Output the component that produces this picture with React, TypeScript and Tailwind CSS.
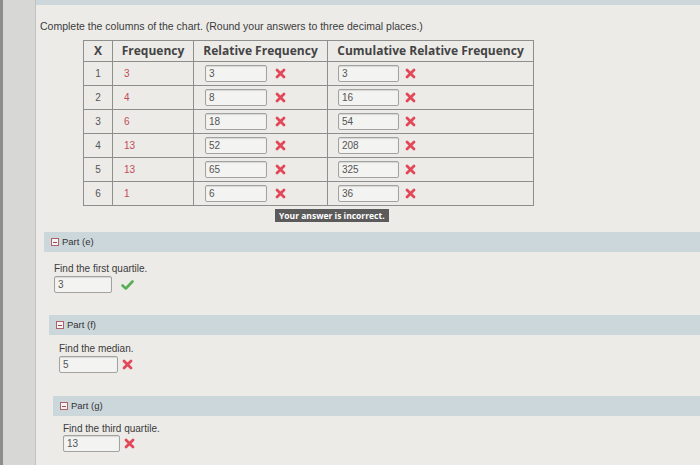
import React from "react";

// Chart rows: x, frequency, relative freq answer, cumulative answer
const rows = [
  { x: 1, f: 3, rel: "3", cum: "3" },
  { x: 2, f: 4, rel: "8", cum: "16" },
  { x: 3, f: 6, rel: "18", cum: "54" },
  { x: 4, f: 13, rel: "52", cum: "208" },
  { x: 5, f: 13, rel: "65", cum: "325" },
  { x: 6, f: 1, rel: "6", cum: "36" },
];

function Cross() {
  return (
    <svg width="11" height="11" viewBox="0 0 11 11" className="shrink-0">
      <path d="M2 2 L9 9 M9 2 L2 9" stroke="#e2475a" strokeWidth="2.8" strokeLinecap="round" />
    </svg>
  );
}

function Check() {
  return (
    <svg width="13" height="10" viewBox="0 0 13 10" className="shrink-0">
      <path d="M1.5 5.5 L4.8 8.5 L11.5 1.5" stroke="#5aae55" strokeWidth="2.6" fill="none" strokeLinecap="round" strokeLinejoin="round" />
    </svg>
  );
}

function AnswerBox({ value, w = "w-[62px]" }: { value: string; w?: string }) {
  return (
    <div
      className={`${w} h-[17px] border border-[#a2a2a0] rounded-[2px] bg-[#f3f3f1] shadow-[inset_0_1px_1px_rgba(0,0,0,0.12)] text-[10px] leading-[15px] pl-[3px] text-[#555]`}
    >
      {value}
    </div>
  );
}

function PartBar({ label, indent }: { label: string; indent: string }) {
  return (
    <div className={`${indent} h-[20px] bg-[#ccd7dc] flex items-center pl-[7px] gap-[3px]`}>
      <span className="w-[8px] h-[8px] border border-[#b0606a] bg-[#f4f4f2] flex items-center justify-center">
        <span className="w-[4px] h-px bg-[#9a4a55]" />
      </span>
      <span className="text-[9.5px] text-[#333] font-medium">{label}</span>
    </div>
  );
}

export default function App() {
  return (
    <div className="w-[700px] h-[465px] flex bg-[#ecebe8] overflow-hidden font-['Liberation_Sans',Arial,sans-serif]">
      <div className="w-[36px] shrink-0 bg-[#d7d7d5] border-l-[3px] border-l-[#8d8d8b] border-r border-r-[#c2c2c0]" />
      <div className="flex-1 flex flex-col">
        <div className="h-[5px] bg-[#cdd6da]" />
        <p className="mt-[15px] pl-[4px] text-[10.5px] leading-[13px] text-[#3b3b3b]">
          Complete the columns of the chart. (Round your answers to three decimal places.)
        </p>

        <div className="relative ml-[47px] mt-[7px] w-[451px]">
          <table className="border-collapse border border-[#8e8e8c] text-[10px] text-[#555]">
            <thead>
              <tr className="h-[21px] font-['Open_Sans',sans-serif] font-bold text-[12px] text-[#444]">
                <th className="w-[29px] border border-[#8e8e8c] font-bold">X</th>
                <th className="w-[81px] border border-[#8e8e8c] font-bold">Frequency</th>
                <th className="w-[134px] border border-[#8e8e8c] font-bold">Relative Frequency</th>
                <th className="w-[206px] border border-[#8e8e8c] font-bold">Cumulative Relative Frequency</th>
              </tr>
            </thead>
            <tbody>
              {rows.map((r) => (
                <tr key={r.x} className="h-[24px]">
                  <td className="border border-[#8e8e8c] text-center text-[#555]">{r.x}</td>
                  <td className="border border-[#8e8e8c] pl-[11px] text-[#c24b5a]">{r.f}</td>
                  <td className="border border-[#8e8e8c] pl-[11px]">
                    <div className="flex items-center gap-[8px]">
                      <AnswerBox value={r.rel} />
                      <Cross />
                    </div>
                  </td>
                  <td className="border border-[#8e8e8c] pl-[10px]">
                    <div className="flex items-center gap-[6px]">
                      <AnswerBox value={r.cum} w="w-[61px]" />
                      <Cross />
                    </div>
                  </td>
                </tr>
              ))}
            </tbody>
          </table>
          <div className="absolute left-[192px] top-[169px] bg-[#5b5b5b] text-white font-['Open_Sans',sans-serif] font-bold text-[8.5px] leading-[13px] px-[4px] whitespace-nowrap">
            Your answer is incorrect.
          </div>
        </div>

        <div className="mt-[26px]">
          <PartBar label="Part (e)" indent="ml-[8px]" />
          <div className="ml-[18px] mt-[10px]">
            <p className="text-[10px] leading-[13px] text-[#3b3b3b]">Find the first quartile.</p>
            <div className="flex items-center gap-[9px] mt-px">
              <AnswerBox value="3" w="w-[58px]" />
              <Check />
            </div>
          </div>
        </div>

        <div className="mt-[22px]">
          <PartBar label="Part (f)" indent="ml-[13px]" />
          <div className="ml-[23px] mt-[7px]">
            <p className="text-[10px] leading-[13px] text-[#3b3b3b]">Find the median.</p>
            <div className="flex items-center gap-[4px] mt-px">
              <AnswerBox value="5" w="w-[59px]" />
              <Cross />
            </div>
          </div>
        </div>

        <div className="mt-[23px]">
          <PartBar label="Part (g)" indent="ml-[17px]" />
          <div className="ml-[27px] mt-[7px]">
            <p className="text-[10px] leading-[12px] text-[#3b3b3b]">Find the third quartile.</p>
            <div className="flex items-center gap-[4px]">
              <AnswerBox value="13" w="w-[57px]" />
              <Cross />
            </div>
          </div>
        </div>
      </div>
    </div>
  );
}
